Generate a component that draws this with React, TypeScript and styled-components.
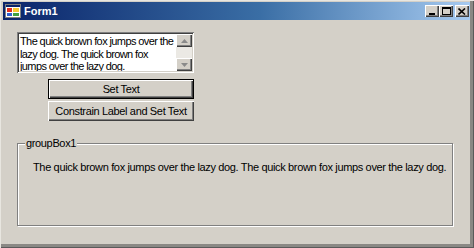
import React from "react";
import styled, { createGlobalStyle } from "styled-components";

const Global = createGlobalStyle`
  html, body { margin: 0; padding: 0; background: #d4d0c8; }
  * { box-sizing: border-box; }
`;

const FONT = `"Liberation Sans", Arial, sans-serif`;

const Window = styled.div`
  width: 474px;
  height: 248px;
  background: #d4d0c8;
  padding: 2px 4px 4px 3px;
  display: flex;
  flex-direction: column;
  box-shadow: inset 1px 1px 0 #e8e6e0, inset -1px -1px 0 #5a5a5a, inset -4px -4px 0 #8a8884;
  font-family: ${FONT};
  font-size: 11px;
  letter-spacing: -0.35px;
  color: #000;
`;

const TitleBar = styled.div`
  height: 18px;
  flex: none;
  display: flex;
  align-items: center;
  padding: 0 1px 0 2px;
  background: linear-gradient(to right, #0a246a 0%, #3a6ea5 55%, #a6caf0 100%);
`;

const TitleText = styled.span`
  color: #fff;
  font-weight: bold;
  font-size: 11px;
  letter-spacing: 0;
  margin-left: 3px;
  flex: 1;
`;

const CaptionButtons = styled.div`
  display: flex;
  align-items: center;
`;

const CaptionButton = styled.div<{ $gap?: number }>`
  width: 14px;
  height: 12px;
  margin-left: ${(p) => p.$gap ?? 0}px;
  background: #d4d0c8;
  box-shadow: inset 1px 1px 0 #fff, inset -1px -1px 0 #404040, inset -2px -2px 0 #808080;
  display: flex;
  align-items: center;
  justify-content: center;
`;

const Client = styled.div`
  flex: 1;
  display: flex;
  flex-direction: column;
  padding: 12px 0 0 14px;
`;

const TextBox = styled.div`
  width: 177px;
  height: 41px;
  background: #fff;
  display: flex;
  box-shadow: inset 1px 1px 0 #808080, inset -1px -1px 0 #fff, inset 2px 2px 0 #404040, inset -2px -2px 0 #d4d0c8;
  padding: 2px;
`;

const TextArea = styled.div`
  flex: 1;
  min-width: 0;
  padding: 1px 0 0 1px;
  line-height: 12.5px;
  letter-spacing: -0.6px;
  white-space: pre;
  overflow: hidden;
`;

const ScrollBar = styled.div`
  width: 16px;
  flex: none;
  display: flex;
  flex-direction: column;
  background: #ebe9e4;
`;

const Track = styled.div`
  flex: 1;
`;

const ScrollButton = styled.div`
  height: 13px;
  background: #d4d0c8;
  box-shadow: inset 1px 1px 0 #fff, inset -1px -1px 0 #404040, inset -2px -2px 0 #808080;
  display: flex;
  align-items: center;
  justify-content: center;
`;

const ButtonColumn = styled.div`
  display: flex;
  flex-direction: column;
  gap: 2px;
  margin: 6px 0 0 31px;
`;

const Button = styled.div<{ $default?: boolean }>`
  width: 146px;
  height: 20px;
  display: flex;
  align-items: center;
  justify-content: center;
  background: #d4d0c8;
  box-shadow: ${(p) =>
    p.$default
      ? "inset 0 0 0 1px #000, inset 2px 2px 0 #fff, inset -2px -2px 0 #404040, inset -3px -3px 0 #808080"
      : "inset 1px 1px 0 #fff, inset -1px -1px 0 #404040, inset -2px -2px 0 #808080"};
`;

const GroupBox = styled.fieldset`
  margin: 16px 0 0 0;
  width: 436px;
  height: 89px;
  border: 1px solid #808080;
  box-shadow: inset 1px 1px 0 #fff, 1px 1px 0 #fff;
  padding: 0 0 0 7px;
  min-width: 0;
`;

const Legend = styled.legend`
  padding: 0 1px;
  font-size: 11px;
  line-height: 13px;
  background: #d4d0c8;
`;

const GroupLabel = styled.div`
  margin: 11px 0 0 8px;
  white-space: nowrap;
`;

const AppIcon = () => (
  <svg width="16" height="16" viewBox="0 0 16 16">
    <rect x="0.5" y="1.5" width="15" height="13" fill="#fff" stroke="#808080" />
    <rect x="1" y="2" width="14" height="2" fill="#0a246a" />
    <rect x="2" y="5" width="5" height="4" fill="#e03020" />
    <rect x="8" y="5" width="6" height="4" fill="#f8c830" />
    <rect x="2" y="10" width="5" height="3" fill="#3060d0" />
    <rect x="8" y="10" width="6" height="3" fill="#40a040" />
  </svg>
);

const MinGlyph = () => (
  <svg width="8" height="7" viewBox="0 0 8 7">
    <rect x="1" y="5" width="6" height="2" fill="#000" />
  </svg>
);

const MaxGlyph = () => (
  <svg width="9" height="8" viewBox="0 0 9 8">
    <rect x="0.5" y="0.5" width="8" height="7" fill="none" stroke="#000" />
    <rect x="0" y="0" width="9" height="2" fill="#000" />
  </svg>
);

const CloseGlyph = () => (
  <svg width="8" height="7" viewBox="0 0 8 7">
    <path d="M0.5 0.5 L7 6.5 M7 0.5 L0.5 6.5" stroke="#000" strokeWidth="1.6" />
  </svg>
);

const Arrow = ({ up }: { up?: boolean }) => (
  <svg width="7" height="4" viewBox="0 0 7 4">
    <path d={up ? "M3.5 0 L7 4 L0 4 Z" : "M0 0 L7 0 L3.5 4 Z"} fill="#8a8a8a" />
  </svg>
);

export default function App() {
  return (
    <>
      <Global />
      <Window>
        <TitleBar>
          <AppIcon />
          <TitleText>Form1</TitleText>
          <CaptionButtons>
            <CaptionButton><MinGlyph /></CaptionButton>
            <CaptionButton><MaxGlyph /></CaptionButton>
            <CaptionButton $gap={2}><CloseGlyph /></CaptionButton>
          </CaptionButtons>
        </TitleBar>
        <Client>
          <TextBox>
            <TextArea>
              {"The quick brown fox jumps over the\nlazy dog. The quick brown fox\njumps over the lazy dog."}
            </TextArea>
            <ScrollBar>
              <ScrollButton><Arrow up /></ScrollButton>
              <Track />
              <ScrollButton><Arrow /></ScrollButton>
            </ScrollBar>
          </TextBox>
          <ButtonColumn>
            <Button $default>Set Text</Button>
            <Button>Constrain Label and Set Text</Button>
          </ButtonColumn>
          <GroupBox>
            <Legend>groupBox1</Legend>
            <GroupLabel>
              The quick brown fox jumps over the lazy dog. The quick brown fox jumps over the lazy dog.
            </GroupLabel>
          </GroupBox>
        </Client>
      </Window>
    </>
  );
}
